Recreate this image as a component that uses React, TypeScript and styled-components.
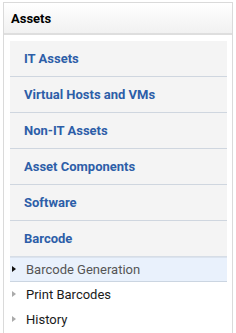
import React from "react";
import styled, { createGlobalStyle } from "styled-components";

const GlobalStyle = createGlobalStyle`
  html, body {
    margin: 0;
    padding: 0;
    background: #ffffff;
    font-family: Roboto, "Liberation Sans", Arial, sans-serif;
  }
`;

const Panel = styled.div`
  margin: 2px 3px 0 3px;
  border: 1px solid #dadada;
  border-bottom: none;
  background: #ffffff;
  height: 331px;
  box-sizing: border-box;
  overflow: hidden;
`;

const PanelHeader = styled.div`
  height: 29px;
  display: flex;
  align-items: center;
  padding-left: 7px;
  padding-top: 1px;
  font-size: 13px;
  font-weight: 700;
  color: #000000;
  background: linear-gradient(#ffffff, #f1f1f1);
  border-bottom: 2px solid #dedede;
`;

const PanelBody = styled.div`
  padding: 6px 5px 0 6px;
`;

const MenuList = styled.ul`
  list-style: none;
  margin: 0;
  padding: 0;
`;

const MenuItem = styled.li`
  height: 35px;
  display: flex;
  align-items: center;
  padding-left: 14px;
  background: #f4f4f4;
  border-bottom: 1px solid #cfd6df;
  font-size: 13px;
  font-weight: 700;
  color: #2d5ea8;

  &:last-child {
    border-bottom: 1px solid #d6dde6;
  }
`;

const SubList = styled.ul`
  list-style: none;
  margin: 0;
  padding: 0;
`;

const SubItem = styled.li<{ $active?: boolean }>`
  height: 25px;
  box-sizing: border-box;
  display: flex;
  align-items: center;
  padding-left: 2px;
  font-size: 13px;
  color: ${(p) => (p.$active ? "#555555" : "#1a1a1a")};
  background: ${(p) => (p.$active ? "#e9f1fc" : "transparent")};
  border-bottom: 1px solid ${(p) => (p.$active ? "#cbd5e1" : "transparent")};
  box-shadow: ${(p) => (p.$active ? "inset 0 1px 0 #dbe3ee" : "none")};
`;

const Arrow = styled.span<{ $active?: boolean }>`
  width: 0;
  height: 0;
  border-top: 3.5px solid transparent;
  border-bottom: 3.5px solid transparent;
  border-left: 4px solid ${(p) => (p.$active ? "#111111" : "#aaaaaa")};
  margin-right: 10px;
`;

const items = [
  "IT Assets",
  "Virtual Hosts and VMs",
  "Non-IT Assets",
  "Asset Components",
  "Software",
  "Barcode",
];

const subItems = [
  { label: "Barcode Generation", active: true },
  { label: "Print Barcodes", active: false },
  { label: "History", active: false },
];

const App: React.FC = () => {
  return (
    <>
      <GlobalStyle />
      <Panel>
        <PanelHeader>Assets</PanelHeader>
        <PanelBody>
          <MenuList>
            {items.map((item) => (
              <MenuItem key={item}>{item}</MenuItem>
            ))}
          </MenuList>
          <SubList>
            {subItems.map((sub) => (
              <SubItem key={sub.label} $active={sub.active}>
                <Arrow $active={sub.active} />
                {sub.label}
              </SubItem>
            ))}
          </SubList>
        </PanelBody>
      </Panel>
    </>
  );
};

export default App;
